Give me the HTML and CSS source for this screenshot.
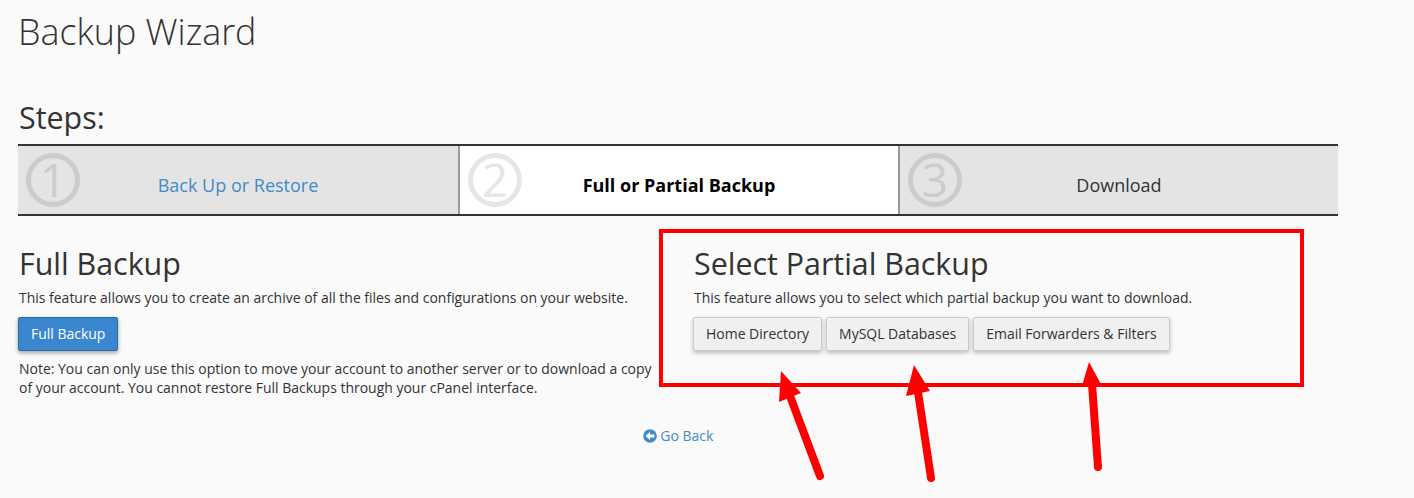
FILE: index.html
```html
<!DOCTYPE html>
<html lang="en">
<head>
    <meta charset="UTF-8">
    <meta name="viewport" content="width=device-width, initial-scale=1.0">
    <title>Backup Wizard</title>
    <link rel="stylesheet" href="styles.css">
</head>
<body>
    <div class="page">
        <h1 class="page-title">Backup Wizard</h1>

        <h2 class="steps-title">Steps:</h2>
        <div class="steps">
            <div class="step">
                <span class="step-number">1</span>
                <a class="step-label" href="#">Back Up or Restore</a>
            </div>
            <div class="step step-active">
                <span class="step-number">2</span>
                <span class="step-label">Full or Partial Backup</span>
            </div>
            <div class="step">
                <span class="step-number">3</span>
                <span class="step-label">Download</span>
            </div>
        </div>

        <div class="backup-columns">
            <div class="backup-col backup-full">
                <h2>Full Backup</h2>
                <p>This feature allows you to create an archive of all the files and configurations on your website.</p>
                <div class="btn-row">
                    <a class="btn btn-primary" href="#">Full Backup</a>
                </div>
                <p class="note">Note: You can only use this option to move your account to another server or to download a copy of your account. You cannot restore Full Backups through your cPanel interface.</p>
            </div>
            <div class="backup-col backup-partial">
                <h2>Select Partial Backup</h2>
                <p>This feature allows you to select which partial backup you want to download.</p>
                <div class="btn-row">
                    <a class="btn" href="#">Home Directory</a>
                    <a class="btn" href="#">MySQL Databases</a>
                    <a class="btn" href="#">Email Forwarders &amp; Filters</a>
                </div>
            </div>
        </div>

        <div class="go-back">
            <a href="#">
                <svg class="back-icon" viewBox="0 0 14 14" aria-hidden="true">
                    <circle cx="7" cy="7" r="6.8" fill="#428bca"/>
                    <path d="M2.6 7 7 3v2.4h4.4v3.2H7V11z" fill="#fff"/>
                </svg>
                Go Back
            </a>
        </div>
    </div>

    <!-- Annotation drawn over the page -->
    <div class="mark-box"></div>
    <svg class="mark-arrows" viewBox="0 0 1414 498" aria-hidden="true">
        <g stroke="#f00" stroke-width="8" stroke-linecap="round" fill="none">
            <path d="M790 396 820 476"/>
            <path d="M918 392 931 478"/>
            <path d="M1092 384 1098 467"/>
        </g>
        <g fill="#f00">
            <path d="M781 371 801 393 779 402z"/>
            <path d="M914 365 930 391 906 396z"/>
            <path d="M1089 362 1102 386 1082 386z"/>
        </g>
    </svg>
</body>
</html>
```

FILE: styles.css
```css
* {
    margin: 0;
    padding: 0;
    box-sizing: border-box;
}

body {
    font-family: "Open Sans", Arial, sans-serif;
    font-size: 13.97px;
    line-height: 20px;
    color: #333;
    background-color: #fafafa;
    height: 498px;
    overflow: hidden;
}

a {
    color: #428bca;
    text-decoration: none;
}

.page {
    width: 1338px;
    padding-left: 18px;
}

.page-title {
    font-size: 35.85px;
    font-weight: 300;
    line-height: 40px;
    padding-top: 12px;
}

.steps-title {
    font-size: 30.4px;
    font-weight: 400;
    line-height: 34px;
    margin-top: 49px;
    padding-left: 1px;
}

.steps {
    display: grid;
    grid-template-columns: 440px 440px 440px;
    height: 72px;
    margin-top: 9px;
    border-top: 2px solid #333;
    border-bottom: 2px solid #333;
    background: #e4e4e4;
}

.step {
    display: flex;
    align-items: center;
    justify-content: center;
    position: relative;
    padding-top: 9px;
    font-size: 18px;
    border-left: 2px solid #999;
}

.step:first-child {
    border-left: 0;
}

.step-active {
    background: #fff;
    color: #000;
    font-weight: 700;
}

.step-number {
    position: absolute;
    left: 8px;
    top: 7px;
    width: 54px;
    height: 54px;
    border: 5px solid #ccc;
    border-radius: 50%;
    color: #ccc;
    font-size: 46px;
    font-weight: 400;
    line-height: 42px;
    text-align: center;
}

.step-active .step-number {
    border-color: #e6e6e6;
    color: #e6e6e6;
}

.backup-columns {
    display: flex;
    margin-top: 29px;
}

.backup-col h2 {
    font-size: 30.4px;
    font-weight: 400;
    line-height: 38px;
    margin-bottom: 5px;
}

.backup-col p {
    line-height: 19px;
}

.backup-full {
    width: 640px;
}

.backup-full h2,
.backup-full p {
    padding-left: 1px;
}

.backup-partial {
    margin-left: 36px;
}

.backup-partial .btn-row {
    margin-left: -1px;
}

.btn-row {
    display: flex;
    gap: 4px;
    margin-top: 10px;
}

.btn {
    display: block;
    height: 34px;
    padding: 6px 12px;
    background: #f0f0f0;
    border: 1px solid #ccc;
    border-radius: 2px;
    box-shadow: 0 2px 4px rgba(0, 0, 0, 0.25);
    color: #333;
}

.btn-primary {
    background: #3a87cf;
    border-color: #2e6da4;
    box-shadow: 0 2px 4px rgba(0, 0, 0, 0.35);
    color: #fff;
}

.backup-col .note {
    margin-top: 8px;
}

.go-back {
    margin-top: 29px;
    text-align: center;
}

.back-icon {
    width: 14px;
    height: 14px;
    vertical-align: -2px;
}

/* red annotation */
.mark-box {
    position: absolute;
    left: 659px;
    top: 229px;
    width: 645px;
    height: 158px;
    border: 4px solid #f00;
}

.mark-arrows {
    position: absolute;
    left: 0;
    top: 0;
    width: 1414px;
    height: 498px;
}
```
